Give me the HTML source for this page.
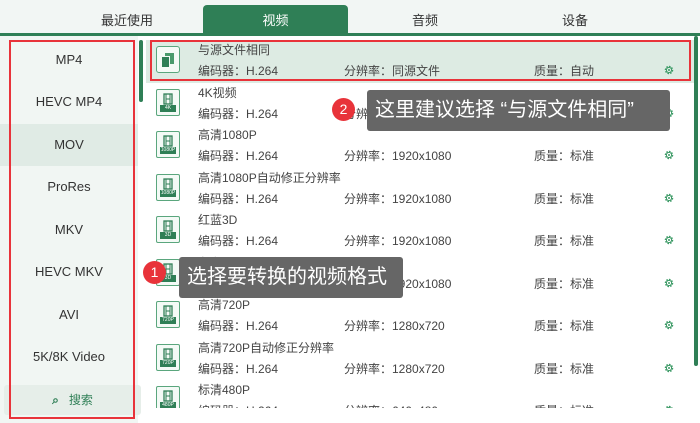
<!DOCTYPE html>
<html><head><meta charset="utf-8"><style>
*{margin:0;padding:0;box-sizing:border-box}
body{width:700px;height:423px;overflow:hidden;background:#fff;font-family:"Liberation Sans","Noto Sans CJK SC",sans-serif;color:#333;position:relative}
.top{position:absolute;left:0;top:0;width:700px;height:36px;background:#f2f6f4;border-bottom:3px solid #2f7f56}
.tab{position:absolute;top:10px;font-size:13px;color:#333;width:150px;text-align:center}
.act{position:absolute;left:203px;top:5px;width:145px;height:31px;background:#2f7f56;border-radius:4px 4px 0 0;color:#fff;font-size:13px;text-align:center;line-height:31px}
.side{position:absolute;left:0;top:36px;width:138px;height:387px;background:#f1f6f3}
.si{position:absolute;left:0;width:138px;height:42px;line-height:42px;text-align:center;font-size:13px;color:#333}
.sel{background:#e0ebe5}
.search{position:absolute;left:4px;top:385px;width:137px;height:30px;background:#e6eee9;border-radius:3px;color:#2f7f56;font-size:12px;text-align:center;line-height:30px}
.red{position:absolute;border:2px solid #e8333a}
.list{position:absolute;left:146px;top:40px;width:548px;height:368px;overflow:hidden}
.row{position:absolute;left:0;width:548px;height:42.5px;font-size:12px;color:#444}
.row .t{position:absolute;left:52px;top:1px}
.row .d{position:absolute;top:22px}
.ic{position:absolute;left:10px;top:6px;width:24px;height:27px;border:1.5px solid #5aa67d;border-radius:2px;background:#f4faf6}
.ic i{position:absolute;left:3px;right:3px;bottom:3px;height:7px;background:#2f7f56;color:#fff;font-size:5px;line-height:7px;text-align:center;font-style:normal}
.ic svg{position:absolute;left:6px;top:3px}
.g{position:absolute;left:517px;top:24px}
.tip{position:absolute;background:#666;color:#fff;font-size:20px;border-radius:3px;padding-left:8px;line-height:41px}
.num{position:absolute;width:23px;height:23px;border-radius:50%;background:#e8333a;color:#fff;font-size:14px;text-align:center;line-height:23px}
</style></head><body>
<svg width="0" height="0" style="position:absolute"><defs>
<symbol id="f" viewBox="0 0 10 12"><rect x="1" y="1" width="8" height="10" fill="none" stroke="#2f7f56" stroke-width="1.3"/><line x1="3" y1="1" x2="3" y2="11" stroke="#2f7f56"/><line x1="7" y1="1" x2="7" y2="11" stroke="#2f7f56"/><line x1="3" y1="6" x2="7" y2="6" stroke="#2f7f56"/></symbol>
<symbol id="gear" viewBox="0 0 12 12"><circle cx="6" cy="6" r="3.6" fill="none" stroke="#3c9a66" stroke-width="1.3" stroke-dasharray="1.6 1.2"/><circle cx="6" cy="6" r="2.6" fill="none" stroke="#3c9a66" stroke-width="1"/><circle cx="6" cy="6" r="1" fill="#3c9a66"/></symbol>
</defs></svg>
<div class="top"></div>
<div class="tab" style="left:52px">最近使用</div>
<div class="act">视频</div>
<div class="tab" style="left:350px">音频</div>
<div class="tab" style="left:500px">设备</div>
<div class="side">
<div class="si" style="top:3px">MP4</div>
<div class="si" style="top:45px">HEVC MP4</div>
<div class="si sel" style="top:88px">MOV</div>
<div class="si" style="top:130px">ProRes</div>
<div class="si" style="top:173px">MKV</div>
<div class="si" style="top:215px">HEVC MKV</div>
<div class="si" style="top:258px">AVI</div>
<div class="si" style="top:300px">5K/8K Video</div>
</div>
<div class="search"><span style="font-weight:bold">&#x2315;</span>&nbsp;&nbsp; 搜索</div>
<div style="position:absolute;left:139px;top:40px;width:4px;height:62px;background:#2f7f56;border-radius:2px"></div>
<div style="position:absolute;left:694px;top:36px;width:4px;height:330px;background:#2f7f56;border-radius:2px"></div>
<div class="list">
<div class="row" style="top:0;background:#ddebe3"><div class="ic" style="border-radius:3px"><div style="position:absolute;left:8px;top:6px;width:9px;height:11px;background:#4a9a6c"></div><div style="position:absolute;left:4px;top:9px;width:9px;height:12px;background:#2f7f56;border:1px solid #f4faf6"></div></div><span class="t">与源文件相同</span><span class="d" style="left:52px">编码器：H.264</span><span class="d" style="left:198px">分辨率：同源文件</span><span class="d" style="left:388px">质量：自动</span><svg class="g" width="12" height="12"><use href="#gear"/></svg></div>
<div class="row" style="top:42.5px"><div class="ic"><svg width="10" height="12"><use href="#f"/></svg><i>4K</i></div><span class="t">4K视频</span><span class="d" style="left:52px">编码器：H.264</span><span class="d" style="left:198px">分辨率：3840x2160</span><span class="d" style="left:388px">质量：标准</span><svg class="g" width="12" height="12"><use href="#gear"/></svg></div>
<div class="row" style="top:85px"><div class="ic"><svg width="10" height="12"><use href="#f"/></svg><i>1080P</i></div><span class="t">高清1080P</span><span class="d" style="left:52px">编码器：H.264</span><span class="d" style="left:198px">分辨率：1920x1080</span><span class="d" style="left:388px">质量：标准</span><svg class="g" width="12" height="12"><use href="#gear"/></svg></div>
<div class="row" style="top:127.5px"><div class="ic"><svg width="10" height="12"><use href="#f"/></svg><i>1080P</i></div><span class="t">高清1080P自动修正分辨率</span><span class="d" style="left:52px">编码器：H.264</span><span class="d" style="left:198px">分辨率：1920x1080</span><span class="d" style="left:388px">质量：标准</span><svg class="g" width="12" height="12"><use href="#gear"/></svg></div>
<div class="row" style="top:170px"><div class="ic"><svg width="10" height="12"><use href="#f"/></svg><i>3D</i></div><span class="t">红蓝3D</span><span class="d" style="left:52px">编码器：H.264</span><span class="d" style="left:198px">分辨率：1920x1080</span><span class="d" style="left:388px">质量：标准</span><svg class="g" width="12" height="12"><use href="#gear"/></svg></div>
<div class="row" style="top:212.5px"><div class="ic"><svg width="10" height="12"><use href="#f"/></svg><i>3D</i></div><span class="t">左右3D</span><span class="d" style="left:52px">编码器：H.264</span><span class="d" style="left:198px">分辨率：1920x1080</span><span class="d" style="left:388px">质量：标准</span><svg class="g" width="12" height="12"><use href="#gear"/></svg></div>
<div class="row" style="top:255px"><div class="ic"><svg width="10" height="12"><use href="#f"/></svg><i>720P</i></div><span class="t">高清720P</span><span class="d" style="left:52px">编码器：H.264</span><span class="d" style="left:198px">分辨率：1280x720</span><span class="d" style="left:388px">质量：标准</span><svg class="g" width="12" height="12"><use href="#gear"/></svg></div>
<div class="row" style="top:297.5px"><div class="ic"><svg width="10" height="12"><use href="#f"/></svg><i>720P</i></div><span class="t">高清720P自动修正分辨率</span><span class="d" style="left:52px">编码器：H.264</span><span class="d" style="left:198px">分辨率：1280x720</span><span class="d" style="left:388px">质量：标准</span><svg class="g" width="12" height="12"><use href="#gear"/></svg></div>
<div class="row" style="top:340px"><div class="ic"><svg width="10" height="12"><use href="#f"/></svg><i>480P</i></div><span class="t">标清480P</span><span class="d" style="left:52px">编码器：H.264</span><span class="d" style="left:198px">分辨率：640x480</span><span class="d" style="left:388px">质量：标准</span><svg class="g" width="12" height="12"><use href="#gear"/></svg></div>
</div>
<div class="red" style="left:9px;top:40px;width:126px;height:379px"></div>
<div class="red" style="left:150px;top:40px;width:541px;height:41px"></div>
<div class="tip" style="left:367px;top:90px;width:303px">这里建议选择 “与源文件相同”</div>
<div class="num" style="left:332px;top:98px">2</div>
<div class="tip" style="left:179px;top:257px;width:224px">选择要转换的视频格式</div>
<div class="num" style="left:143px;top:261px">1</div>
</body></html>
